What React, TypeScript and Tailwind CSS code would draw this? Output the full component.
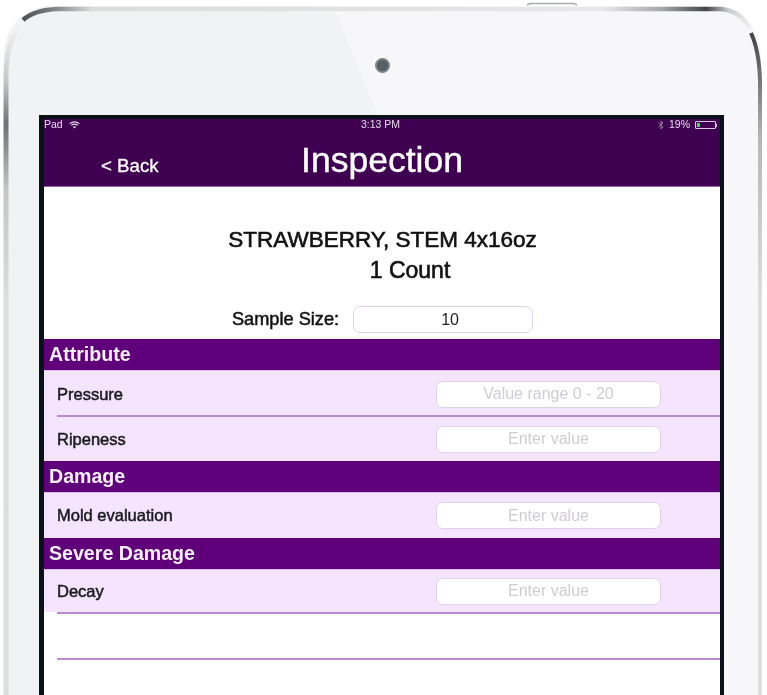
const font = "font-['Liberation_Sans',Arial,sans-serif]";

function DeviceEdge() {
  return (
    <svg className="absolute left-0 top-0 pointer-events-none" width="767" height="695" viewBox="0 0 767 695" fill="none">
      <defs>
        <linearGradient id="topEdge" x1="20" y1="0" x2="750" y2="0" gradientUnits="userSpaceOnUse">
          <stop offset="0" stopColor="#4a4d4f" />
          <stop offset="0.04" stopColor="#77797a" />
          <stop offset="0.1" stopColor="#dcdddb" />
          <stop offset="0.8" stopColor="#e6e7e6" />
          <stop offset="0.88" stopColor="#a5a7a6" />
          <stop offset="0.94" stopColor="#434547" />
          <stop offset="0.97" stopColor="#c9cbcb" />
          <stop offset="1" stopColor="#f0f0f0" />
        </linearGradient>
        <linearGradient id="leftEdge" x1="0" y1="25" x2="0" y2="300" gradientUnits="userSpaceOnUse">
          <stop offset="0" stopColor="#f4f4f4" />
          <stop offset="0.2" stopColor="#c8c9c9" />
          <stop offset="0.36" stopColor="#6f7172" />
          <stop offset="0.6" stopColor="#c4c5c4" />
          <stop offset="1" stopColor="#dcdedc" />
        </linearGradient>
        <linearGradient id="rightEdge" x1="0" y1="30" x2="0" y2="300" gradientUnits="userSpaceOnUse">
          <stop offset="0" stopColor="#3d3f41" />
          <stop offset="0.15" stopColor="#6a6c6d" />
          <stop offset="0.4" stopColor="#b5b6b6" />
          <stop offset="1" stopColor="#dedfde" />
        </linearGradient>
      </defs>
      <path d="M527 5 L530 3.5 H574 L577 5" stroke="#a9abab" strokeWidth="1.5" />
      <path d="M23 20 Q34 10 58 9 H720 Q740 10 750 28" stroke="url(#topEdge)" strokeWidth="4.5" />
      <path d="M21 25 Q6 42 6 75 V695" stroke="url(#leftEdge)" strokeWidth="5" />
      <path d="M751 33 Q759 50 760 80 V695" stroke="url(#rightEdge)" strokeWidth="4" />
    </svg>
  );
}

function Field({ value, placeholder }: { value?: string; placeholder?: string }) {
  return (
    <div
      className={`flex h-[27px] items-center justify-center rounded-[7px] border border-[#ded3e4] bg-white text-[16px] ${
        value ? "pl-[14px] text-[#222]" : "text-[#cfccd3]"
      }`}
    >
      {value ?? placeholder}
    </div>
  );
}

function SectionHeader({ title }: { title: string }) {
  return (
    <div className="flex h-[32px] items-center border-b border-[#d9c0e4] bg-[#5f007a] pl-[5px] pt-[1px] text-[19.6px] font-bold text-[#f8f0fa]">
      {title}
    </div>
  );
}

function Row({ label, placeholder, divider, className }: { label: string; placeholder: string; divider?: boolean; className: string }) {
  return (
    <div className={`relative flex items-center justify-between bg-[#f4e4fd] pl-[13px] pr-[59px] ${className}`}>
      <span className="text-[16.5px] text-[#1b1b1f] [-webkit-text-stroke:0.5px_#1b1b1f]">{label}</span>
      <div className="w-[225px]">
        <Field placeholder={placeholder} />
      </div>
      {divider && <div className="absolute bottom-0 left-[13px] right-0 h-[2px] bg-[#b98bd2]" />}
    </div>
  );
}

function WifiIcon() {
  return (
    <svg width="11" height="8" viewBox="0 0 11 8" fill="none" stroke="#e6d9ea" strokeWidth="1.1">
      <path d="M0.5 2.6 Q5.5 -0.8 10.5 2.6" />
      <path d="M2.2 4.2 Q5.5 2 8.8 4.2" />
      <path d="M5.5 7.6 L3.8 5.7 Q5.5 4.6 7.2 5.7 Z" fill="#e6d9ea" stroke="none" />
    </svg>
  );
}

function BluetoothIcon() {
  return (
    <svg width="6" height="10" viewBox="0 0 6 10" fill="none" stroke="#8f7a9a" strokeWidth="1">
      <path d="M0.5 2.8 L5 7 L3 9 V1 L5 3 L0.5 7.2" />
    </svg>
  );
}

function BatteryIcon() {
  return (
    <div className="flex items-center">
      <div className="h-[8px] w-[21px] rounded-[1px] border border-[#d8c8df] py-[1px] pl-[1px]">
        <div className="h-full w-[3px] bg-[#39e04a]" />
      </div>
      <div className="h-[3px] w-[1px] bg-[#d8c8df]" />
    </div>
  );
}

export default function App() {
  return (
    <div className={`relative h-[695px] w-[767px] overflow-hidden bg-white blur-[0.4px] ${font}`}>
      <div className="relative ml-[4px] mt-[6px] h-[689px] w-[757px] overflow-hidden rounded-t-[48px] bg-[#f7f7f9] px-[35px] pt-[109px]">
        <div className="absolute left-0 top-0 h-[109px] w-[374px] bg-[#f1f2f4] [clip-path:polygon(0_0,88%_0,100%_100%,0_100%)]" />
        <div className="absolute left-0 top-[109px] h-[580px] w-[35px] bg-[#f1f2f4]" />
        <div className="absolute left-[371px] top-[52px] h-[15px] w-[15px] rounded-full border-2 border-[#7d8489] bg-[#565e66]" />

        <div className="relative flex h-[580px] w-[685px] flex-col border-l-[5px] border-r-[4px] border-t-[4px] border-[#0b1119] bg-white">
          <header className="h-[68px] border-b border-[#9a5fb0] bg-[#3f0052] text-white">
            <div className="flex h-[11px] items-center justify-between pr-[3px] pt-[1px] text-[10.5px] text-[#e6d9ea]">
              <div className="flex w-[100px] items-center gap-[6px]">
                <span>Pad</span>
                <WifiIcon />
              </div>
              <span>3:13 PM</span>
              <div className="flex w-[100px] items-center justify-end gap-[5px]">
                <BluetoothIcon />
                <span>19%</span>
                <BatteryIcon />
              </div>
            </div>
            <div className="relative flex h-[56px] items-center justify-center">
              <span className="absolute left-[57px] top-[24px] text-[18.7px] leading-[24px] [-webkit-text-stroke:0.3px_#fff]">&lt; Back</span>
              <h1 className="pt-[4px] text-[35.5px] leading-[44px] [-webkit-text-stroke:0.4px_#fff]">Inspection</h1>
            </div>
          </header>

          <div className="flex h-[152px] flex-col items-center text-[#111]">
            <p className="mt-[39px] pl-[1px] text-[22.5px] leading-[28px] [-webkit-text-stroke:0.6px_#111]">STRAWBERRY, STEM 4x16oz</p>
            <p className="mt-[2px] pl-[56px] text-[23px] leading-[28px] [-webkit-text-stroke:0.6px_#111]">1 Count</p>
            <div className="mt-[22px] flex items-center gap-[14px] pl-[1px]">
              <span className="text-[18.2px] [-webkit-text-stroke:0.5px_#111]">Sample Size:</span>
              <div className="w-[180px]">
                <Field value="10" />
              </div>
            </div>
          </div>

          <SectionHeader title="Attribute" />
          <Row label="Pressure" placeholder="Value range 0 - 20" divider className="h-[46px]" />
          <Row label="Ripeness" placeholder="Enter value" className="h-[44px]" />
          <SectionHeader title="Damage" />
          <Row label="Mold evaluation" placeholder="Enter value" className="h-[45px]" />
          <SectionHeader title="Severe Damage" />
          <Row label="Decay" placeholder="Enter value" className="h-[42px]" />

          <div className="ml-[13px] h-[2px] bg-[#b98bd2]" />
          <div className="ml-[13px] mt-[44px] h-[2px] bg-[#b98bd2]" />
        </div>
      </div>
      <DeviceEdge />
    </div>
  );
}
